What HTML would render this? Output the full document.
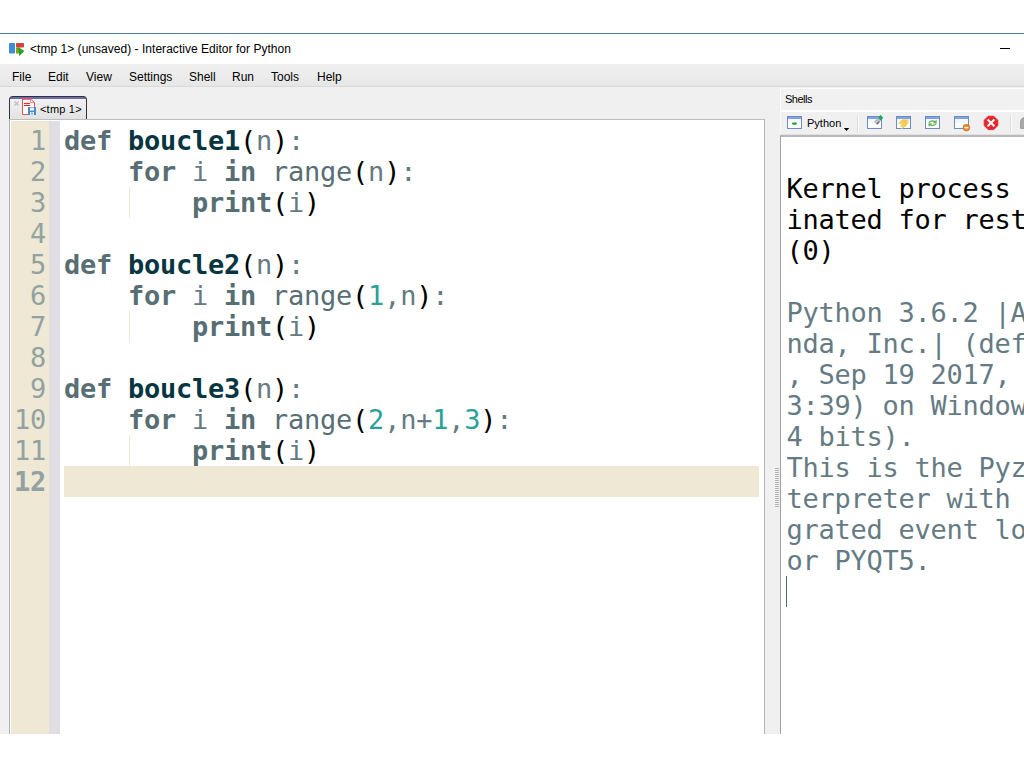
<!DOCTYPE html>
<html>
<head>
<meta charset="utf-8">
<title>tmp 1 (unsaved) - Interactive Editor for Python</title>
<style>
html,body{margin:0;padding:0;}
body{width:1024px;height:768px;position:relative;overflow:hidden;background:#fff;font-family:"Liberation Sans",sans-serif;}
.abs{position:absolute;}
#win{position:absolute;left:0;top:0;width:1024px;height:734px;overflow:hidden;background:#f0f0f0;}
#topwhite{left:0;top:0;width:1024px;height:33px;background:#fff;}
#blueline{left:0;top:33px;width:1024px;height:1px;background:#4e7aa5;}
#titlebar{left:0;top:34px;width:1024px;height:30px;background:#fff;}
#title{left:30px;top:42px;font-size:12px;line-height:14px;color:#000;white-space:nowrap;letter-spacing:0.03px;}
#minbtn{left:1000px;top:48px;width:10px;height:1px;background:#000;}
#menubar{left:0;top:64px;width:1024px;height:22px;background:linear-gradient(#f0f0f0,#ececec 50%,#e6e6e6);border-bottom:1px solid #d9d9d9;}
.menu{position:absolute;top:70px;font-size:12px;line-height:14px;color:#000;white-space:nowrap;}
#tab{left:9px;top:96px;width:76px;height:22px;border:1px solid #33333f;border-top:1px solid #2f2f4a;border-bottom:none;border-radius:4px 4px 0 0;background:linear-gradient(#6e6e9e 0,#6e6e9e 2px,#f2f2f2 2px,#e2e2e2 100%);}
#tabtext{left:40px;top:103px;font-size:11px;line-height:13px;color:#000;white-space:nowrap;letter-spacing:0.2px;}
#edframe{left:9px;top:119px;width:756px;height:616px;background:#fff;border-left:1px solid #b2b2b2;border-top:1px solid #bdbdbd;border-right:1px solid #b4b4b4;box-sizing:border-box;}
#lnbg{left:11px;top:121px;width:38px;height:613px;background:#eee8d5;}
#bpbg{left:49px;top:121px;width:11px;height:613px;background:linear-gradient(to right,#dfdedc,#dfdfe4 40%,#dedee2);}
.mono{font-family:"DejaVu Sans Mono","Liberation Mono",monospace;font-size:27px;line-height:31px;white-space:pre;letter-spacing:-0.255px;}
#lnums{left:11px;top:125px;width:35px;text-align:right;color:#93a1a1;}
#code{left:64px;top:125px;color:#657b83;}
#curline{left:64px;top:466px;width:695px;height:31px;background:#eee8d5;}
.kw{color:#586e75;font-weight:bold;}
.fn{color:#073642;font-weight:bold;}
.bi{color:#586e75;}
.pa{color:#000;}
.nu{color:#2aa198;}
.guide{position:absolute;width:1px;background:#eee8d5;left:129px;height:31px;}
#shellstitle{left:780px;top:88px;width:244px;height:22px;background:#f1f1f1;border-top:1px solid #fbfbfb;border-left:1px solid #fbfbfb;box-sizing:border-box;}
#shellslabel{left:785px;top:93px;font-size:11px;line-height:13px;color:#000;letter-spacing:-0.5px;}
#tbwhite{left:780px;top:110px;width:244px;height:2px;background:#fff;}
#toolbar{left:780px;top:112px;width:244px;height:23px;background:#f0f0f0;border-left:1px solid #f8f8f8;box-sizing:border-box;}
#pylabel{left:807px;top:117px;font-size:11px;line-height:13px;color:#000;}
#shell{left:780px;top:135px;width:244px;height:599px;background:#fff;border-left:1px solid #a0a0a0;border-top:2px solid #b9b9b9;box-sizing:border-box;overflow:hidden;}
#shelltext{left:786.5px;top:142px;width:237px;overflow:hidden;color:#657b83;}
.blk{color:#000;}
#cursor{left:786px;top:576px;width:1px;height:31px;background:#55666c;}
</style>
</head>
<body>
<div id="win">
<div class="abs" id="topwhite"></div>
<div class="abs" id="blueline"></div>
<div class="abs" id="titlebar"></div>
<svg class="abs" style="left:9px;top:42px" width="16" height="15" viewBox="0 0 16 15">
<rect x="0" y="1" width="6" height="10.5" rx="0.8" fill="#3a8fd6"/>
<rect x="7" y="1" width="8" height="4.5" rx="0.8" fill="#d8403a"/>
<rect x="7" y="5.5" width="4" height="6" fill="#8a9a1c"/>
<path d="M9.5 5 L15.3 9 L10.2 14.3 Z" fill="#22a52a"/>
</svg>
<div class="abs" id="title">&lt;tmp 1&gt; (unsaved) - Interactive Editor for Python</div>
<div class="abs" id="minbtn"></div>
<div class="abs" id="menubar"></div>
<div class="menu" style="left:12px">File</div>
<div class="menu" style="left:48px">Edit</div>
<div class="menu" style="left:86px">View</div>
<div class="menu" style="left:129px">Settings</div>
<div class="menu" style="left:189px">Shell</div>
<div class="menu" style="left:232px">Run</div>
<div class="menu" style="left:271px">Tools</div>
<div class="menu" style="left:317px">Help</div>

<div class="abs" id="edframe"></div>
<div class="abs" id="tab"></div>
<svg class="abs" style="left:13px;top:97px" width="24" height="19" viewBox="0 0 24 19">
<path d="M1.5 4.5 L5.5 8.5 M5.5 4.5 L1.5 8.5" stroke="#bdbdbd" stroke-width="1.2" fill="none"/>
<path d="M9.5 2 H17.5 L21.5 5.5 V17.5 H9.5 Z" fill="#fff" stroke="#e25555" stroke-width="1"/>
<path d="M9 2 H18" stroke="#d4547a" stroke-width="1.2"/>
<path d="M17.5 2 V5.5 H21.5" fill="none" stroke="#e88" stroke-width="1"/>
<rect x="11" y="5.8" width="6" height="1.1" fill="#d62020"/>
<rect x="11" y="7.9" width="6" height="1.1" fill="#d62020"/>
<rect x="15" y="10" width="8" height="8" fill="#4d88c8"/>
<rect x="17" y="10.6" width="4" height="3" fill="#eef4fb"/>
<rect x="17" y="15" width="4" height="3" fill="#dbe8f6"/>
<rect x="18.4" y="15.8" width="1.2" height="1.6" fill="#4d88c8"/>
</svg>
<div class="abs" id="tabtext">&lt;tmp 1&gt;</div>
<div class="abs" id="lnbg"></div>
<div class="abs" id="bpbg"></div>
<div class="abs" id="curline"></div>
<div class="guide" style="top:187px"></div>
<div class="guide" style="top:311px"></div>
<div class="guide" style="top:435px"></div>
<div class="abs mono" id="lnums">1
2
3
4
5
6
7
8
9
10
11
<b>12</b></div>
<div class="abs mono" id="code"><span class="kw">def</span> <span class="fn">boucle1</span><span class="pa">(</span>n<span class="pa">)</span>:
    <span class="kw">for</span> i <span class="kw">in</span> <span class="bi">range</span><span class="pa">(</span>n<span class="pa">)</span>:
        <span class="kw">print</span><span class="pa">(</span>i<span class="pa">)</span>

<span class="kw">def</span> <span class="fn">boucle2</span><span class="pa">(</span>n<span class="pa">)</span>:
    <span class="kw">for</span> i <span class="kw">in</span> <span class="bi">range</span><span class="pa">(</span><span class="nu">1</span>,n<span class="pa">)</span>:
        <span class="kw">print</span><span class="pa">(</span>i<span class="pa">)</span>

<span class="kw">def</span> <span class="fn">boucle3</span><span class="pa">(</span>n<span class="pa">)</span>:
    <span class="kw">for</span> i <span class="kw">in</span> <span class="bi">range</span><span class="pa">(</span><span class="nu">2</span>,n+<span class="nu">1</span>,<span class="nu">3</span><span class="pa">)</span>:
        <span class="kw">print</span><span class="pa">(</span>i<span class="pa">)</span>
</div>

<div class="abs" style="left:775px;top:468px;width:4px;height:40px;background:repeating-linear-gradient(to bottom,#b4b4b4 0,#b4b4b4 1px,transparent 1px,transparent 2px)"></div>
<div class="abs" id="shellstitle"></div>
<div class="abs" id="shellslabel">Shells</div>
<div class="abs" id="tbwhite"></div>
<div class="abs" id="toolbar"></div>
<div class="abs" id="pylabel">Python</div>
<svg class="abs" style="left:787px;top:116px" width="16" height="14" viewBox="0 0 16 14"><rect x="0.5" y="0.5" width="14" height="12" fill="#fdfeff" stroke="#6f8ac4" stroke-width="1"/><rect x="1" y="1" width="13" height="2" fill="#7ba5e3"/><rect x="1" y="3" width="13" height="4" fill="#eef4fc" opacity="0.6"/><rect x="5" y="6.5" width="5" height="2.2" rx="1.1" fill="#2f9e2f"/></svg>
<svg class="abs" style="left:843px;top:127px" width="8" height="5" viewBox="0 0 8 5"><path d="M0.8 1 H6.2 L3.5 4 Z" fill="#000"/></svg>
<div class="abs" style="left:857px;top:115px;width:1px;height:17px;background:#dedede"></div>
<div class="abs" style="left:858px;top:115px;width:1px;height:17px;background:#fbfbfb"></div>
<svg class="abs" style="left:867px;top:114px" width="18" height="16" viewBox="0 0 18 16"><g transform="translate(0,2)"><rect x="0.5" y="0.5" width="14" height="12" fill="#fdfeff" stroke="#6f8ac4" stroke-width="1"/><rect x="1" y="1" width="13" height="2" fill="#7ba5e3"/><rect x="1" y="3" width="13" height="4" fill="#eef4fc" opacity="0.6"/></g>
<path d="M11.2 4 L13.8 6.8 L10.2 10.6 L7 7.6 Z" fill="#bcbcc2"/><path d="M9.2 9.6 L10.4 10.8 L12.8 8 L12 7.2 Z" fill="#6f6863"/><path d="M13.4 0.8 L16.2 3.8 L13.8 6.8 L11.2 4 Z" fill="#22a860"/></svg>
<svg class="abs" style="left:896px;top:116px" width="16" height="16" viewBox="0 0 16 16"><rect x="0.5" y="0.5" width="14" height="12" fill="#fdfeff" stroke="#6f8ac4" stroke-width="1"/><rect x="1" y="1" width="13" height="2" fill="#7ba5e3"/><rect x="1" y="3" width="13" height="4" fill="#eef4fc" opacity="0.6"/><path d="M6.2 3.8 H12.6 L10.4 6.4 H13 L9.6 9.2 H10.8 L5.4 13.2 L6.6 10.2 H4.2 L6.4 7.6 H2.2 Z" fill="#f2cd52" stroke="#eabf3c" stroke-width="0.4"/></svg>
<svg class="abs" style="left:925px;top:116px" width="16" height="14" viewBox="0 0 16 14"><rect x="0.5" y="0.5" width="14" height="12" fill="#fdfeff" stroke="#6f8ac4" stroke-width="1"/><rect x="1" y="1" width="13" height="2" fill="#7ba5e3"/><rect x="1" y="3" width="13" height="4" fill="#eef4fc" opacity="0.6"/><path d="M3.4 6.6 C4.6 4.2 8.6 3.8 10.2 5 L11.6 3.8 L11.8 7.4 L7.8 7.2 L9 6.2 C7.6 5.6 5.4 5.8 4.6 7 Z" fill="#68b45c"/><path d="M11.8 7.8 C10.6 10.4 6.6 10.8 5 9.6 L3.6 10.8 L3.4 7.2 L7.4 7.4 L6.2 8.4 C7.6 9 9.8 8.8 10.6 7.6 Z" fill="#68b45c"/></svg>
<svg class="abs" style="left:954px;top:116px" width="17" height="16" viewBox="0 0 17 16"><rect x="0.5" y="0.5" width="14" height="12" fill="#fdfeff" stroke="#6f8ac4" stroke-width="1"/><rect x="1" y="1" width="13" height="2" fill="#7ba5e3"/><rect x="1" y="3" width="13" height="4" fill="#eef4fc" opacity="0.6"/><circle cx="12.4" cy="11.6" r="3.4" fill="#e8872a" stroke="#c96a18" stroke-width="0.6"/><rect x="10.4" y="10.9" width="4" height="1.5" fill="#fff4e0"/></svg>
<svg class="abs" style="left:983px;top:115px" width="16" height="16" viewBox="0 0 16 16"><path d="M5.2 1.2 H10.8 L14.8 5.2 V10.6 L10.8 14.6 H5.2 L1.2 10.6 V5.2 Z" fill="#e8262c" stroke="#d92027" stroke-width="0.8"/><path d="M4.6 4.5 L11.4 11.3 M11.4 4.5 L4.6 11.3" stroke="#fff" stroke-width="2"/></svg>
<div class="abs" style="left:1010px;top:115px;width:1px;height:17px;background:#dedede"></div>
<div class="abs" style="left:1011px;top:115px;width:1px;height:17px;background:#fbfbfb"></div>
<svg class="abs" style="left:1019px;top:116px" width="6" height="14" viewBox="0 0 6 14"><path d="M1.6 12.4 V6 C1.6 3.4 3.4 1.6 6 1.4 V12.4 Z" fill="#a9a9a9" stroke="#8e8e8e" stroke-width="0.8"/></svg>
<div class="abs" style="left:781px;top:134px;width:243px;height:1px;background:#e0e0e0"></div>
<div class="abs" id="shell"></div>
<div class="abs mono" id="shelltext">
<span class="blk">Kernel process term
inated for restart. 
(0)</span>

Python 3.6.2 |Anaco
nda, Inc.| (default
, Sep 19 2017, 08:0
3:39) on Windows (6
4 bits).
This is the Pyzo in
terpreter with inte
grated event loop f
or PYQT5.
</div>
<div class="abs" id="cursor"></div>
</div>
</body>
</html>
